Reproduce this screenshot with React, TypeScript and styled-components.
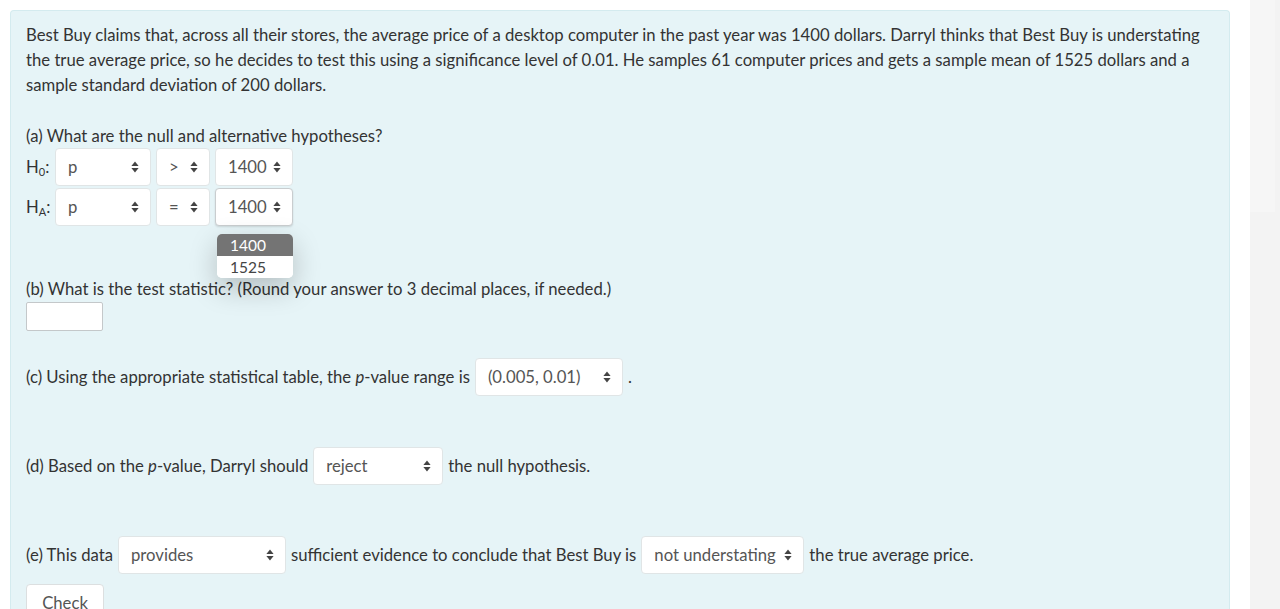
import React from "react";
import styled, { createGlobalStyle } from "styled-components";

const GlobalStyle = createGlobalStyle`
  html, body {
    margin: 0;
    padding: 0;
    background: #ffffff;
  }
  body {
    font-family: Lato, "Liberation Sans", sans-serif;
    font-size: 16.7px;
    color: #333333;
  }
`;

const Page = styled.div`
  display: flex;
  height: 609px;
  overflow: hidden;
`;

const Main = styled.main`
  flex: 1;
  padding: 10px 20px 0 10px;
`;

const SideTrack = styled.aside`
  width: 30px;
  background: #f3f3f3;
  display: flex;
  flex-direction: column;
`;

const SideThumb = styled.div`
  height: 212px;
  margin-right: 5px;
  background: #f6f6f6;
`;

const Panel = styled.section`
  background: #e6f4f7;
  border: 1px solid #d4ebef;
  border-bottom: none;
  border-radius: 4px 4px 0 0;
  padding: 12px 15px 0 15px;
  min-height: 620px;
`;

const Intro = styled.p`
  margin: 0;
  line-height: 25px;
`;

const Question = styled.div<{ $top: number }>`
  margin-top: ${({ $top }) => $top}px;
  line-height: 24px;
`;

const HypRow = styled.div<{ $top?: number }>`
  display: flex;
  align-items: center;
  gap: 5px;
  margin-top: ${({ $top }) => $top ?? 0}px;
`;

const HypLabel = styled.span`
  width: 24px;
  white-space: nowrap;
  sub {
    font-size: 11px;
    vertical-align: -3px;
  }
`;

const Line = styled.div<{ $top: number }>`
  display: flex;
  align-items: center;
  gap: 5px;
  margin-top: ${({ $top }) => $top}px;
  white-space: nowrap;
`;

const Select = styled.div<{ $width: number; $focused?: boolean }>`
  box-sizing: border-box;
  width: ${({ $width }) => $width}px;
  height: 38px;
  display: inline-flex;
  align-items: center;
  justify-content: space-between;
  padding: 0 11px 0 12px;
  background: #ffffff;
  border: 1px solid ${({ $focused }) => ($focused ? "#c9cdcf" : "#e0e5e6")};
  border-radius: 4px;
  color: #555555;
  box-shadow: ${({ $focused }) =>
    $focused ? "0 1px 2px rgba(0,0,0,0.12)" : "none"};
`;

const Anchor = styled.div`
  position: relative;
`;

const Menu = styled.ul`
  position: absolute;
  top: 46px;
  left: 2px;
  width: 76px;
  margin: 0;
  padding: 0;
  list-style: none;
  background: #ffffff;
  border-radius: 5px;
  overflow: hidden;
  box-shadow: 0 10px 28px rgba(0, 0, 0, 0.22);
  z-index: 2;
`;

const MenuItem = styled.li<{ $active?: boolean }>`
  height: 22px;
  line-height: 22px;
  padding: 0 13px;
  font-size: 15.5px;
  color: ${({ $active }) => ($active ? "#ffffff" : "#444444")};
  background: ${({ $active }) => ($active ? "#747474" : "#ffffff")};
`;

const AnswerInput = styled.div`
  box-sizing: border-box;
  width: 77px;
  height: 29px;
  margin-top: 1px;
  background: #ffffff;
  border: 1px solid #c4c8ca;
  border-radius: 2px;
`;

const CheckButton = styled.button`
  box-sizing: border-box;
  margin-top: 10px;
  width: 78px;
  height: 38px;
  background: #ffffff;
  border: 1px solid #dcdfe0;
  border-radius: 4px;
  font-family: inherit;
  font-size: 16.7px;
  color: #555555;
`;

const SortIcon = () => (
  <svg width="8" height="12" viewBox="0 0 8 12" aria-hidden="true">
    <path d="M4 0.5 L7.6 5 H0.4 Z" fill="#444" />
    <path d="M4 11.5 L7.6 7 H0.4 Z" fill="#444" />
  </svg>
);

const Choice: React.FC<{ value: string; width: number; focused?: boolean }> = ({
  value,
  width,
  focused,
}) => (
  <Select $width={width} $focused={focused}>
    <span>{value}</span>
    <SortIcon />
  </Select>
);

export default function App() {
  return (
    <>
      <GlobalStyle />
      <Page>
        <Main>
          <Panel>
            <Intro>
              Best Buy claims that, across all their stores, the average price of a desktop
              computer in the past year was 1400 dollars. Darryl thinks that Best Buy is
              understating the true average price, so he decides to test this using a
              significance level of 0.01. He samples 61 computer prices and gets a sample mean
              of 1525 dollars and a sample standard deviation of 200 dollars.
            </Intro>

            <Question $top={26}>(a) What are the null and alternative hypotheses?</Question>
            <HypRow>
              <HypLabel>
                H<sub>0</sub>:
              </HypLabel>
              <Choice value="p" width={96} />
              <Choice value=">" width={54} />
              <Choice value="1400" width={78} />
            </HypRow>
            <HypRow $top={2}>
              <HypLabel>
                H<sub>A</sub>:
              </HypLabel>
              <Choice value="p" width={96} />
              <Choice value="=" width={54} />
              <Anchor>
                <Choice value="1400" width={78} focused />
                <Menu>
                  <MenuItem $active>1400</MenuItem>
                  <MenuItem>1525</MenuItem>
                </Menu>
              </Anchor>
            </HypRow>

            <Question $top={51}>
              (b) What is the test statistic? (Round your answer to 3 decimal places, if needed.)
            </Question>
            <AnswerInput />

            <Line $top={27}>
              <span>
                (c) Using the appropriate statistical table, the <i>p</i>-value range is
              </span>
              <Choice value="(0.005, 0.01)" width={148} />
              <span>.</span>
            </Line>

            <Line $top={51}>
              <span>
                (d) Based on the <i>p</i>-value, Darryl should
              </span>
              <Choice value="reject" width={130} />
              <span>the null hypothesis.</span>
            </Line>

            <Line $top={51}>
              <span>(e) This data</span>
              <Choice value="provides" width={168} />
              <span>sufficient evidence to conclude that Best Buy is</span>
              <Choice value="not understating" width={163} />
              <span>the true average price.</span>
            </Line>

            <CheckButton>Check</CheckButton>
          </Panel>
        </Main>
        <SideTrack>
          <SideThumb />
        </SideTrack>
      </Page>
    </>
  );
}
